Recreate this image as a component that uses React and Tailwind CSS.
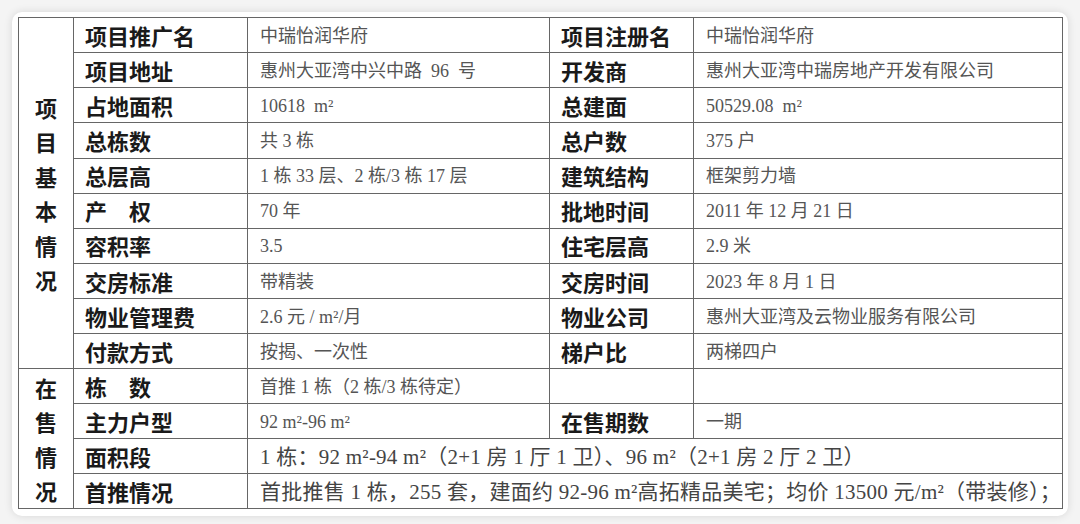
const LABEL = 'border border-[#666] px-[11px] py-0 text-[22px] font-semibold text-[#1a1a1a] whitespace-nowrap'
const VALUE = 'border border-[#666] px-[12px] pt-[2px] pb-0 text-[18px] text-[#555] whitespace-pre [font-family:"Liberation_Serif","Noto_Sans_CJK_SC",serif]'
const WIDE = 'border border-[#666] px-[12px] pt-[2px] pb-0 text-[21px] tracking-[0.25px] text-[#444] whitespace-pre [font-family:"Liberation_Serif","Noto_Sans_CJK_SC",serif]'

const BASIC = [
  ['项目推广名', '中瑞怡润华府', '项目注册名', '中瑞怡润华府'],
  ['项目地址', '惠州大亚湾中兴中路  96  号', '开发商', '惠州大亚湾中瑞房地产开发有限公司'],
  ['占地面积', '10618  m²', '总建面', '50529.08  m²'],
  ['总栋数', '共 3 栋', '总户数', '375 户'],
  ['总层高', '1 栋 33 层、2 栋/3 栋 17 层', '建筑结构', '框架剪力墙'],
  ['产　权', '70 年', '批地时间', '2011 年 12 月 21 日'],
  ['容积率', '3.5', '住宅层高', '2.9 米'],
  ['交房标准', '带精装', '交房时间', '2023 年 8 月 1 日'],
  ['物业管理费', '2.6 元 / m²/月', '物业公司', '惠州大亚湾及云物业服务有限公司'],
  ['付款方式', '按揭、一次性', '梯户比', '两梯四户'],
]

function VerticalTitle({ text }) {
  return (
    <div className="flex flex-col items-center">
      {text.split('').map((c, i) => (
        <span key={i} className="leading-[34.5px] text-[22px] font-semibold text-[#1a1a1a]">
          {c}
        </span>
      ))}
    </div>
  )
}

export default function App() {
  return (
    <div className="w-[1080px] h-[524px] bg-[#f4f4f4] pt-[12px] pl-[12px]">
      <div className="w-[1056px] h-[504px] bg-white rounded-[10px] shadow-[0_0_8px_rgba(0,0,0,0.12)] pt-[5px] pl-[6px]">
        <table className="table-fixed border-collapse w-[1044px] [font-family:'Noto_Sans_CJK_SC',sans-serif]">
          <colgroup>
            <col className="w-[55px]" />
            <col className="w-[174px]" />
            <col className="w-[302px]" />
            <col className="w-[144px]" />
            <col className="w-[369px]" />
          </colgroup>
          <tbody>
            {BASIC.map((r, i) => (
              <tr key={i} className="h-[35.15px]">
                {i === 0 && (
                  <td rowSpan={10} className="border border-[#666] p-0 align-middle">
                    <VerticalTitle text="项目基本情况" />
                  </td>
                )}
                <td className={LABEL}>{r[0]}</td>
                <td className={VALUE}>{r[1]}</td>
                <td className={LABEL}>{r[2]}</td>
                <td className={VALUE}>{r[3]}</td>
              </tr>
            ))}
            <tr className="h-[35px]">
              <td rowSpan={4} className="border border-[#666] p-0 align-middle">
                <VerticalTitle text="在售情况" />
              </td>
              <td className={LABEL}>栋　数</td>
              <td className={VALUE}>首推 1 栋（2 栋/3 栋待定）</td>
              <td className={LABEL}></td>
              <td className={VALUE}></td>
            </tr>
            <tr className="h-[35px]">
              <td className={LABEL}>主力户型</td>
              <td className={VALUE}>92 m²-96 m²</td>
              <td className={LABEL}>在售期数</td>
              <td className={VALUE}>一期</td>
            </tr>
            <tr className="h-[35px]">
              <td className={LABEL}>面积段</td>
              <td colSpan={3} className={WIDE}>
                {'1 栋：92 m²-94 m²（2+1 房 1 厅 1 卫）、96 m²（2+1 房 2 厅 2 卫）'}
              </td>
            </tr>
            <tr className="h-[35px]">
              <td className={LABEL}>首推情况</td>
              <td colSpan={3} className={WIDE}>
                {'首批推售 1 栋，255 套，建面约 92-96 m²高拓精品美宅；均价 13500 元/m²（带装修）；'}
              </td>
            </tr>
          </tbody>
        </table>
      </div>
    </div>
  )
}
